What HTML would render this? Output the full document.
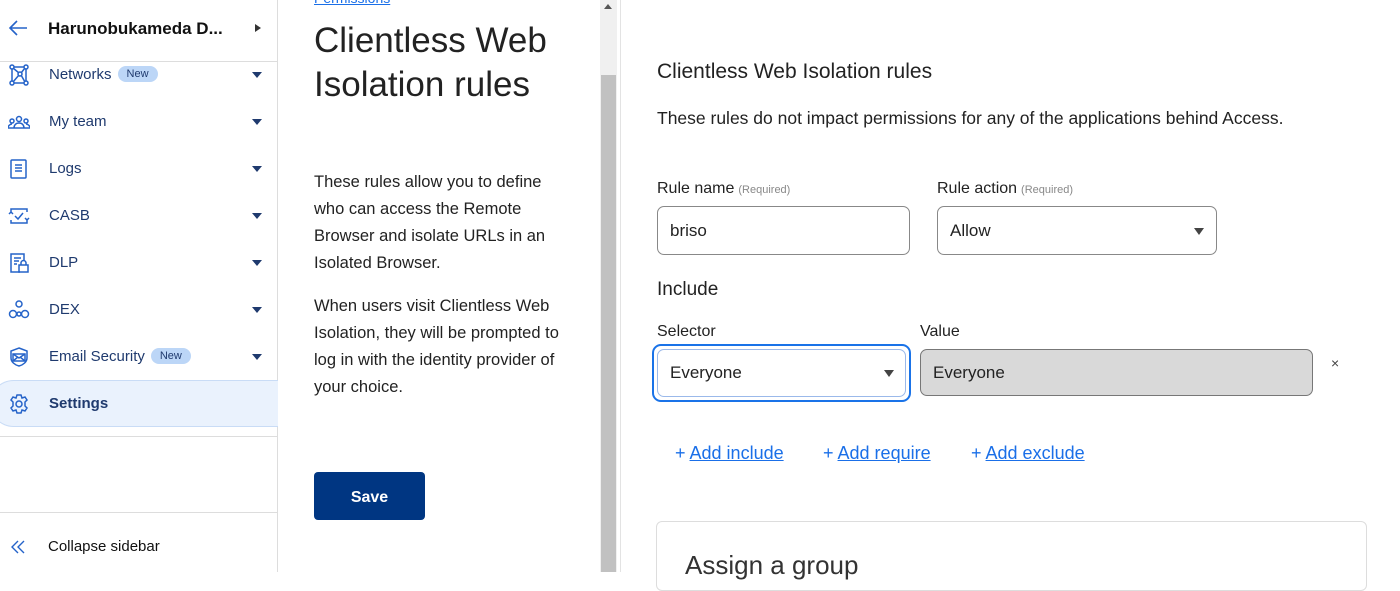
<!DOCTYPE html>
<html><head><meta charset="utf-8"><style>
*{box-sizing:border-box;margin:0;padding:0}
body{width:1400px;height:572px;overflow:hidden;background:#fff;font-family:"Liberation Sans",sans-serif;color:#222;position:relative}
.sb{position:absolute;left:0;top:0;width:278px;height:572px;border-right:1px solid #ddd}
.hdr{position:absolute;top:0;left:0;width:277px;height:62px;border-bottom:1px solid #ddd}
.item{position:absolute;left:0;width:277px;height:47px;display:flex;align-items:center;color:#1f3a6e;font-size:15px}
.item svg{position:absolute;left:8px}
.item .t{position:absolute;left:49px}
.item .car{position:absolute;left:252px;width:0;height:0;border-left:5px solid transparent;border-right:5px solid transparent;border-top:6px solid #1f3a6e}
.new{display:inline-block;background:#bcd6f7;color:#1f3a6e;font-size:11px;border-radius:10px;padding:2px 9px;margin-left:6px;vertical-align:2px}
.mid{position:absolute;left:278px;top:0;width:322px;height:572px}
.scr{position:absolute;left:600px;top:0;width:17px;height:572px;background:#f0f0f0}
.thumb{position:absolute;left:601px;top:75px;width:15px;height:497px;background:#c1c1c1}
.main{position:absolute;left:620px;top:0;width:780px;height:572px;border-left:1px solid #e3e3e3}
.lbl{position:absolute;font-size:16px;color:#222}
.req{font-size:11px;color:#888;margin-left:4px}
.inp{position:absolute;border:1px solid #888;border-radius:7px;height:49px;font-size:17px;padding-left:12px;display:flex;align-items:center}
.tri{position:absolute;width:0;height:0;border-left:5px solid transparent;border-right:5px solid transparent;border-top:7px solid #444}
.lnk{position:absolute;top:443px;font-size:18px;color:#1a6fe8}
.lnk u{text-decoration:underline}
</style></head><body>
<div class="sb">
 <div class="hdr">
  <svg style="position:absolute;left:8px;top:19px" width="20" height="18" viewBox="0 0 20 18"><path d="M19 9H2M9 2L2 9l7 7" fill="none" stroke="#2563c9" stroke-width="1.6"/></svg>
  <div style="position:absolute;left:48px;top:19px;font-size:17px;font-weight:bold;color:#111">Harunobukameda D...</div>
  <div style="position:absolute;left:255px;top:24px;width:0;height:0;border-top:4px solid transparent;border-bottom:4px solid transparent;border-left:6px solid #333"></div>
 </div>
 <div class="item" style="top:51px"><svg width="22" height="22" viewBox="0 0 22 22" fill="none" stroke="#2563c9" stroke-width="1.5"><circle cx="4" cy="3" r="2"/><circle cx="18" cy="3" r="2"/><circle cx="4" cy="19" r="2"/><circle cx="18" cy="19" r="2"/><circle cx="12" cy="10" r="2"/><path d="M4 5v12M18 5v12M6 3h10M6 19h10M5 4l6 5M17 4l-4 5M5 18l6-7M17 18l-4-7"/></svg><span class="t">Networks<span class="new">New</span></span><span class="car"></span></div>
 <div class="item" style="top:98px"><svg width="22" height="22" viewBox="0 0 22 22" fill="none" stroke="#2563c9" stroke-width="1.5"><circle cx="11" cy="8" r="2.5"/><circle cx="4" cy="10" r="2"/><circle cx="18" cy="10" r="2"/><path d="M6 17c0-3 2-5 5-5s5 2 5 5M0 17c0-2 2-4 4-4M22 17c0-2-2-4-4-4M0 17h22"/></svg><span class="t">My team</span><span class="car"></span></div>
 <div class="item" style="top:145px"><svg width="22" height="22" viewBox="0 0 22 22" fill="none" stroke="#2563c9" stroke-width="1.5"><rect x="3" y="2" width="15" height="18" rx="1"/><path d="M7 7h7M7 10h7M7 13h7"/></svg><span class="t">Logs</span><span class="car"></span></div>
 <div class="item" style="top:192px"><svg width="22" height="22" viewBox="0 0 22 22" fill="none" stroke="#2563c9" stroke-width="1.5"><path d="M3 7V4h16v3M3 15v3h16v-3M1 9l2-2 2 2M17 13l2 2 2-2M7 11l3 3 5-6"/></svg><span class="t">CASB</span><span class="car"></span></div>
 <div class="item" style="top:239px"><svg width="22" height="22" viewBox="0 0 22 22" fill="none" stroke="#2563c9" stroke-width="1.5"><path d="M12 20H3V2h13v7M6 6h7M6 9h5M6 12h3"/><rect x="11" y="13" width="9" height="7"/><path d="M13 13v-2a2.5 2.5 0 015 0v2"/></svg><span class="t">DLP</span><span class="car"></span></div>
 <div class="item" style="top:286px"><svg width="22" height="22" viewBox="0 0 22 22" fill="none" stroke="#2563c9" stroke-width="1.5"><circle cx="11" cy="5" r="3"/><circle cx="5" cy="15" r="3.5"/><circle cx="17" cy="15" r="3.5"/><circle cx="11" cy="15" r="2"/></svg><span class="t">DEX</span><span class="car"></span></div>
 <div class="item" style="top:333px"><svg width="22" height="22" viewBox="0 0 22 22" fill="none" stroke="#2563c9" stroke-width="1.5"><path d="M11 2l8 3v7c0 4-4 7-8 8-4-1-8-4-8-8V5z"/><rect x="5" y="8" width="12" height="7"/><path d="M5 8l6 4 6-4M5 15l5-4M17 15l-5-4"/></svg><span class="t">Email Security<span class="new">New</span></span><span class="car"></span></div>
 <div style="position:absolute;left:-10px;top:380px;width:288px;height:47px;background:#eaf2fd;border:1px solid #c9dcf6;border-radius:24px 0 0 24px;border-right:none"></div>
 <div class="item" style="top:380px"><svg width="22" height="22" viewBox="0 0 22 22" fill="none" stroke="#2563c9" stroke-width="1.5"><circle cx="11" cy="11" r="3"/><path d="M9 2h4l1 3 3-1 2 3-2 2v4l2 2-2 3-3-1-1 3H9l-1-3-3 1-2-3 2-2V9L3 7l2-3 3 1z"/></svg><span class="t" style="font-weight:bold">Settings</span></div>
 <div style="position:absolute;top:436px;left:0;width:277px;border-top:1px solid #ddd"></div>
 <div style="position:absolute;top:512px;left:0;width:277px;border-top:1px solid #ddd"></div>
 <svg style="position:absolute;left:11px;top:540px" width="14" height="14" viewBox="0 0 14 14" fill="none" stroke="#2563c9" stroke-width="1.4"><path d="M7 1L1 7l6 6M13 1L7 7l6 6"/></svg>
 <div style="position:absolute;left:48px;top:538px;font-size:15px;color:#111">Collapse sidebar</div>
</div>
<div class="mid">
 <div style="position:absolute;left:36px;top:-10px;font-size:14px;color:#1a6fe8;text-decoration:underline">Permissions</div>
 <div style="position:absolute;left:36px;top:19px;font-size:35px;line-height:44px;color:#222">Clientless Web<br>Isolation rules</div>
 <div style="position:absolute;left:36px;top:169px;width:250px;font-size:16.5px;line-height:27px;color:#222">These rules allow you to define who can access the Remote Browser and isolate URLs in an Isolated Browser.</div>
 <div style="position:absolute;left:36px;top:293px;width:250px;font-size:16.5px;line-height:27px;color:#222">When users visit Clientless Web Isolation, they will be prompted to log in with the identity provider of your choice.</div>
 <div style="position:absolute;left:36px;top:472px;width:111px;height:48px;background:#003682;border-radius:4px;color:#fff;font-weight:bold;font-size:16px;display:flex;align-items:center;justify-content:center;padding-top:3px">Save</div>
</div>
<div class="scr"></div><div class="thumb"></div>
<div style="position:absolute;left:604px;top:4px;width:0;height:0;border-left:4px solid transparent;border-right:4px solid transparent;border-bottom:5px solid #555"></div>
<div class="main"></div>
<div style="position:absolute;left:657px;top:60px;font-size:21px;color:#222">Clientless Web Isolation rules</div>
<div style="position:absolute;left:657px;top:108px;font-size:17.5px;color:#222">These rules do not impact permissions for any of the applications behind Access.</div>
<div class="lbl" style="left:657px;top:180px">Rule name<span class="req">(Required)</span></div>
<div class="lbl" style="left:937px;top:180px">Rule action<span class="req">(Required)</span></div>
<div class="inp" style="left:657px;top:206px;width:253px">briso</div>
<div class="inp" style="left:937px;top:206px;width:280px">Allow<span class="tri" style="left:256px;top:21px"></span></div>
<div style="position:absolute;left:657px;top:279px;font-size:19px;color:#222">Include</div>
<div class="lbl" style="left:657px;top:323px">Selector</div>
<div class="lbl" style="left:920px;top:323px">Value</div>
<div style="position:absolute;left:652px;top:344px;width:259px;height:58px;border:2px solid #1a73e8;border-radius:9px"></div>
<div class="inp" style="left:657px;top:349px;width:249px;height:48px;border-color:#9bb9ea">Everyone<span class="tri" style="left:226px;top:20px"></span></div>
<div class="inp" style="left:920px;top:349px;width:393px;height:47px;background:#d9d9d9;border-color:#777">Everyone</div>
<div style="position:absolute;left:1331px;top:355px;font-size:14px;color:#444">×</div>
<div class="lnk" style="left:675px">+ <u>Add include</u></div>
<div class="lnk" style="left:823px">+ <u>Add require</u></div>
<div class="lnk" style="left:971px">+ <u>Add exclude</u></div>
<div style="position:absolute;left:656px;top:521px;width:711px;height:70px;border:1px solid #ddd;border-radius:6px;background:#fff"></div>
<div style="position:absolute;left:685px;top:550px;font-size:26px;color:#333">Assign a group</div>
</body></html>
